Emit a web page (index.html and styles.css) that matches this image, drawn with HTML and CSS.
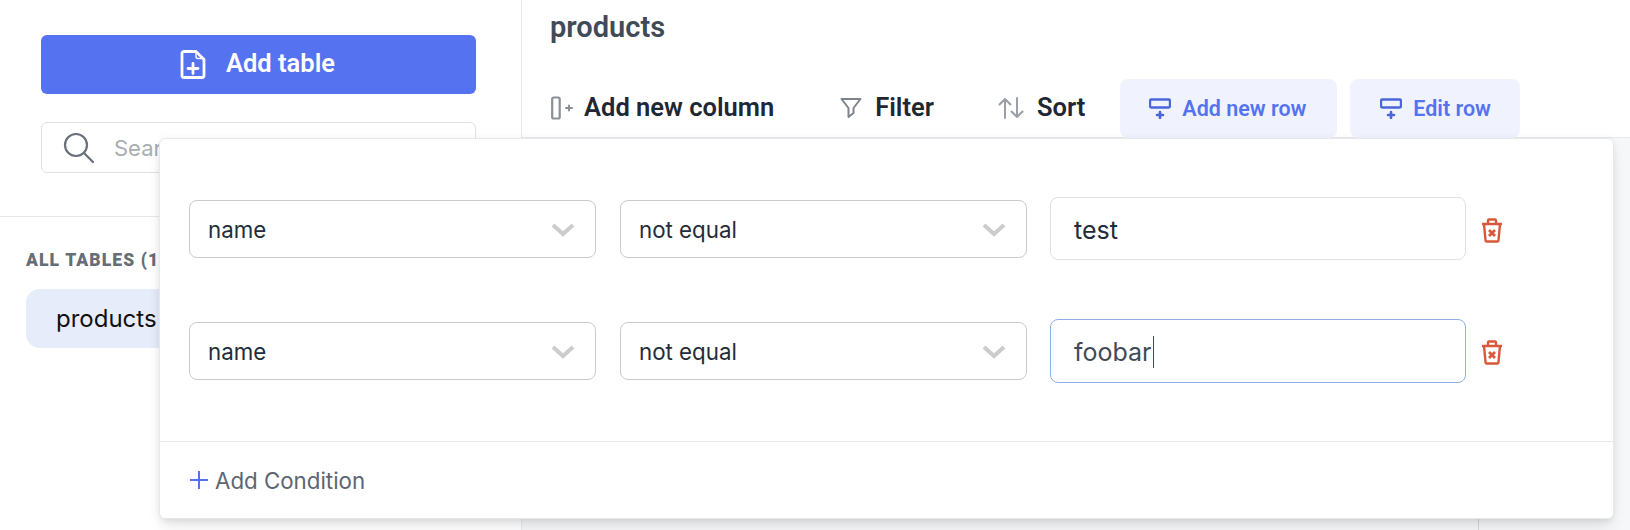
FILE: index.html
```html
<!DOCTYPE html>
<html lang="en">
<head>
<meta charset="utf-8">
<title>Tables</title>
<link rel="stylesheet" href="styles.css">
</head>
<body>
<div class="app">
  <aside class="sidebar">
    <div class="side-top">
      <button class="add-table">
        <svg width="26" height="31" viewBox="0 0 26 30" fill="none" stroke="#fff" stroke-width="2.800" stroke-linejoin="round" stroke-linecap="round"><path d="M4 2h12l8 8v16a2 2 0 0 1-2 2H4a2 2 0 0 1-2-2V4a2 2 0 0 1 2-2z"/><path d="M16 2v5a2 2 0 0 0 2 2h6" stroke-width="1.400"/><path d="M13 14v10M8 19h10"/></svg>
        <span>Add table</span>
      </button>
      <div class="search">
        <svg width="32" height="32" viewBox="0 0 32 32" fill="none" stroke="#68707a" stroke-width="2.200" stroke-linecap="round"><circle cx="14" cy="13" r="11"/><path d="M22 21l9 9"/></svg>
        <span>Search tables</span>
      </div>
    </div>
    <div class="side-list">
      <div class="side-label">ALL TABLES (1)</div>
      <div class="side-item">products</div>
    </div>
  </aside>
  <main class="content">
    <h1 class="title">products</h1>
    <div class="toolbar">
      <div class="tool first">
        <svg width="22" height="24" viewBox="0 0 22 24" fill="none" stroke="#8a9097" stroke-linecap="round"><rect x="1.200" y="1.500" width="7.500" height="21" rx="1.500" stroke-width="2.200"/><path d="M15 12h6M18 9.500v5" stroke-width="2"/></svg>
        <span>Add new column</span>
      </div>
      <div class="tool filter">
        <svg width="22" height="22" viewBox="0 0 22 22" fill="none" stroke="#7d848c" stroke-width="2" stroke-linejoin="round"><path d="M1.500 2h19l-7 9v5l-5 4v-9z"/></svg>
        <span>Filter</span>
      </div>
      <div class="tool sort">
        <svg width="26" height="22" viewBox="0 0 26 22" fill="none" stroke="#9a9fa6" stroke-width="2" stroke-linecap="round" stroke-linejoin="round"><path d="M7 21V2M1.500 7.500L7 2l5.500 5.500M19 1v19M13.500 14.500L19 20l5.500-5.500"/></svg>
        <span>Sort</span>
      </div>
      <button class="row-btn add">
        <svg width="22" height="21" viewBox="0 0 22 21" fill="none" stroke="#4a66d8" stroke-linecap="round"><rect x="1" y="1.500" width="20" height="8" rx="1.500" stroke-width="2.400"/><path d="M11 14v6M8 17h6" stroke-width="2.600"/></svg>
        <span>Add new row</span>
      </button>
      <button class="row-btn edit">
        <svg width="22" height="21" viewBox="0 0 22 21" fill="none" stroke="#4a66d8" stroke-linecap="round"><rect x="1" y="1.500" width="20" height="8" rx="1.500" stroke-width="2.400"/><path d="M11 14v6M8 17h6" stroke-width="2.600"/></svg>
        <span>Edit row</span>
      </button>
    </div>
    <div class="grid-area">
      <div class="grid-col"></div>
      <div class="empty">No data available in table</div>
    </div>
  </main>
</div>

<div class="popup">
  <div class="conditions">
    <div class="cond">
      <div class="select"><span>name</span><svg width="24" height="14" viewBox="0 0 24 14" fill="none" stroke="#cccccc" stroke-width="4"><path d="M2 2l10 9 10-9"/></svg></div>
      <div class="select"><span>not equal</span><svg width="24" height="14" viewBox="0 0 24 14" fill="none" stroke="#cccccc" stroke-width="4"><path d="M2 2l10 9 10-9"/></svg></div>
      <div class="input">test</div>
      <svg class="trash" width="22" height="25" viewBox="0 0 22 25" fill="none" stroke="#d9573a" stroke-width="2.400" stroke-linejoin="round"><path d="M1 6h20M3 6l1.500 16a1.500 1.500 0 0 0 1.500 1.500h10a1.500 1.500 0 0 0 1.500-1.500L19 6M7 6V2.500a1 1 0 0 1 1-1h6a1 1 0 0 1 1 1V6"/><path d="M8 12l6 6M14 12l-6 6" stroke-width="2.800"/></svg>
    </div>
    <div class="cond">
      <div class="select"><span>name</span><svg width="24" height="14" viewBox="0 0 24 14" fill="none" stroke="#cccccc" stroke-width="4"><path d="M2 2l10 9 10-9"/></svg></div>
      <div class="select"><span>not equal</span><svg width="24" height="14" viewBox="0 0 24 14" fill="none" stroke="#cccccc" stroke-width="4"><path d="M2 2l10 9 10-9"/></svg></div>
      <div class="input focus"><span>foobar</span><i class="caret"></i></div>
      <svg class="trash" width="22" height="25" viewBox="0 0 22 25" fill="none" stroke="#d9573a" stroke-width="2.400" stroke-linejoin="round"><path d="M1 6h20M3 6l1.500 16a1.500 1.500 0 0 0 1.500 1.500h10a1.500 1.500 0 0 0 1.500-1.500L19 6M7 6V2.500a1 1 0 0 1 1-1h6a1 1 0 0 1 1 1V6"/><path d="M8 12l6 6M14 12l-6 6" stroke-width="2.800"/></svg>
    </div>
  </div>
  <div class="popup-foot">
    <svg width="18" height="18" viewBox="0 0 18 18" fill="none" stroke="#5272f0" stroke-width="2"><path d="M9 0v18M0 9h18"/></svg>
    <span>Add Condition</span>
  </div>
</div>
</body>
</html>
```

FILE: styles.css
```css
* { box-sizing: border-box; }
html, body { margin: 0; height: 530px; overflow: hidden; background: #fff; }
body { font-family: Inter, "Liberation Sans", sans-serif; color: #1f2733; }
button { font: inherit; border: 0; }

.app { display: flex; height: 530px; }

.sidebar { width: 521px; flex: none; display: flex; flex-direction: column; }
.side-top { height: 217px; padding: 35px 41px 0; border-bottom: 1px solid #e6e8eb; flex: none; }
.add-table {
  width: 435px; height: 59px; background: #5572f1; color: #fff; border-radius: 6px;
  display: flex; align-items: center; justify-content: center; gap: 20px;
  font-family: Roboto, sans-serif; font-weight: 600; font-size: 25.500px;
}
.add-table span { padding-bottom: 3px; }
.add-table svg { margin-left: -2px; }
.search {
  margin-top: 28px; width: 435px; height: 51px; border: 1px solid #dfe1e4; border-radius: 6px;
  display: flex; align-items: center; gap: 20px; padding-left: 20px;
  font-size: 22px; line-height: 26px; color: #a9adb4;
}
.side-list { padding: 32px 26px 0; }
.side-label { font-family: Roboto, sans-serif; font-weight: 900; font-size: 17.500px; letter-spacing: 1.100px; color: #666d76; line-height: 22px; white-space: nowrap; }
.side-item {
  margin-top: 18px; height: 59px; width: 300px; background: #e7ecfb; border-radius: 14px;
  padding-left: 30px; display: flex; align-items: center; font-size: 24px; color: #111;
}

.content { flex: 1; border-left: 1px solid #e8e9ec; display: flex; flex-direction: column; min-width: 0; }
.title { margin: 0; padding: 9px 0 0 28px; font-family: Roboto, sans-serif; font-weight: 600; font-size: 29px; line-height: 36px; color: #3f4b57; }
.toolbar { margin-top: 34px; padding-left: 29px; height: 59px; display: flex; align-items: center; flex: none; border-bottom: 1px solid #e8e9ec; }
.tool { display: flex; align-items: center; font-family: Roboto, sans-serif; font-weight: 600; font-size: 25.500px; color: #1f2733; }
.tool span { padding-bottom: 2px; }
.tool.first { gap: 11px; }
.tool.filter { margin-left: 66px; gap: 13px; }
.tool.sort { margin-left: 64px; gap: 13px; }
.row-btn {
  height: 59px; background: #f0f3fe; border-radius: 8px; color: #5572f1;
  display: flex; align-items: center; font-family: Roboto, sans-serif; font-weight: 600; font-size: 21.500px; gap: 11px; padding: 0;
}
.row-btn.add { width: 217px; margin-left: 35px; padding-left: 29px; }
.row-btn.edit { width: 170px; margin-left: 13px; padding-left: 30px; }
.grid-area { flex: 1; background: #f6f7f9; position: relative; overflow: hidden; }
.grid-col { width: 957px; height: 100%; border-right: 1px solid #d5d7db; }
.empty { position: absolute; left: 280px; top: 387px; font-size: 24px; font-weight: 500; color: #1f2733; white-space: nowrap; }

.popup {
  position: absolute; left: 159px; top: 138px; width: 1455px; height: 381px;
  background: #fff; border: 1px solid #e6e8eb; border-radius: 6px;
  box-shadow: 0 10px 15px -3px rgba(0, 0, 0, .1), 0 4px 6px -2px rgba(0, 0, 0, .05), 0 0 8px rgba(0, 0, 0, .05);
  display: flex; flex-direction: column;
}
.conditions { height: 303px; border-bottom: 1px solid #e6e8eb; padding: 58px 29px 0; display: flex; flex-direction: column; gap: 59px; flex: none; }
.cond { display: flex; align-items: center; height: 63px; }
.select {
  width: 407px; height: 58px; border: 1px solid #c9cacd; border-radius: 8px; margin-right: 24px; flex: none;
  display: flex; align-items: center; justify-content: space-between; padding: 2px 20px 0 18px;
  font-size: 22.300px; color: #232c3a;
}
.input {
  width: 416px; height: 63px; border: 1px solid #dfe0e3; border-radius: 8px; flex: none; margin-left: -1px;
  display: flex; align-items: center; padding: 2px 0 0 23px; font-size: 25px; color: #232c3a;
}
.input.focus { border-color: #8fb0e2; color: #3f4b57; height: 64px; }
.caret { display: block; width: 1px; height: 32px; background: #3f4b57; margin-left: 1px; }
.trash { margin: 4px 0 0 15px; flex: none; }
.popup-foot { flex: 1; display: flex; align-items: center; padding-left: 30px; gap: 7px; font-size: 22.300px; color: #5e6570; }
```
